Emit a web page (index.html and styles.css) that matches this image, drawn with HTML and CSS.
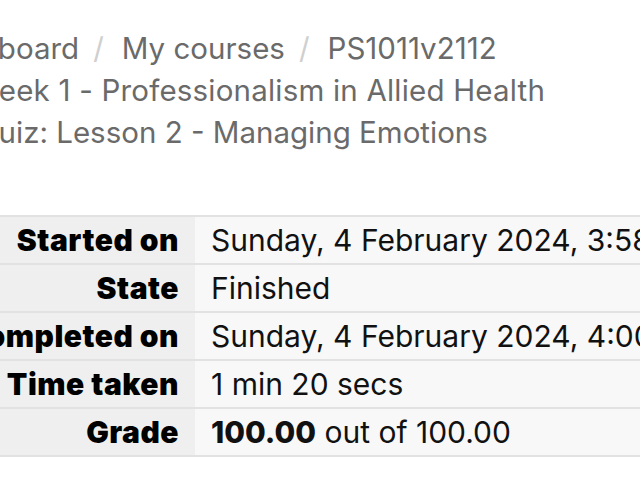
FILE: index.html
```html
<!DOCTYPE html>
<html lang="en">
<head>
  <meta charset="UTF-8" />
  <title>Quiz review</title>
  <link rel="stylesheet" href="styles.css">
</head>
<body>

  <nav class="crumbs">
    <div class="crumb-line first">
      <a href="#">Dashboard</a><span class="sep">/</span>
      <a href="#">My courses</a><span class="sep">/</span>
      <a href="#">PS1011v2112</a>
    </div>
    <div class="crumb-line second"><a href="#">Week 1 - Professionalism in Allied Health</a></div>
    <div class="crumb-line third"><a href="#">Quiz: Lesson 2 - Managing Emotions</a></div>
  </nav>

  <table class="summary">
    <tr><th>Started on</th><td>Sunday, 4 February 2024, 3:58 PM</td></tr>
    <tr><th>State</th><td>Finished</td></tr>
    <tr><th>Completed on</th><td>Sunday, 4 February 2024, 4:00 PM</td></tr>
    <tr><th>Time taken</th><td>1 min 20 secs</td></tr>
    <tr><th>Grade</th><td><b>100.00</b> out of 100.00</td></tr>
  </table>

</body>
</html>
```

FILE: styles.css
```css
*{box-sizing:border-box;margin:0;padding:0;font-family:Inter,"Noto Sans",sans-serif}
html,body{overflow:hidden}
body{
  width:640px;
  height:479px;
  background:#fff;
}
.crumbs{
  padding-top:27px;
  font-size:29.5px;
  line-height:42px;
  color:#6a6a6a;
  white-space:nowrap;
}
.crumb-line{display:flex;align-items:center}
.crumb-line.first{margin-left:-73px}
.crumb-line.second{margin-left:-29px}
.crumb-line.third{margin-left:-24px}
.crumbs a{color:#6a6a6a;text-decoration:none}
.crumb-line.second a{letter-spacing:.2px}
.sep{color:#cfcfcf;margin:0 18px 0 14px}

.summary{
  margin-top:62px;
  margin-left:-60px;
  border-collapse:collapse;
  white-space:nowrap;
  font-size:30px;
  color:#111;
}
.summary th,.summary td{
  height:48px;
  border-top:2px solid #e2e2e2;
  border-bottom:2px solid #e2e2e2;
  vertical-align:middle;
}
.summary th{
  width:255px;
  min-width:255px;
  text-align:right;
  padding-right:16px;
  background:#efefef;
  font-weight:900;
  letter-spacing:.5px;
  color:#000;
}
.summary td{
  padding-left:16px;
  background:#f8f8f8;
  font-weight:400;
  color:#111;
}
.summary b{font-weight:800}
```
